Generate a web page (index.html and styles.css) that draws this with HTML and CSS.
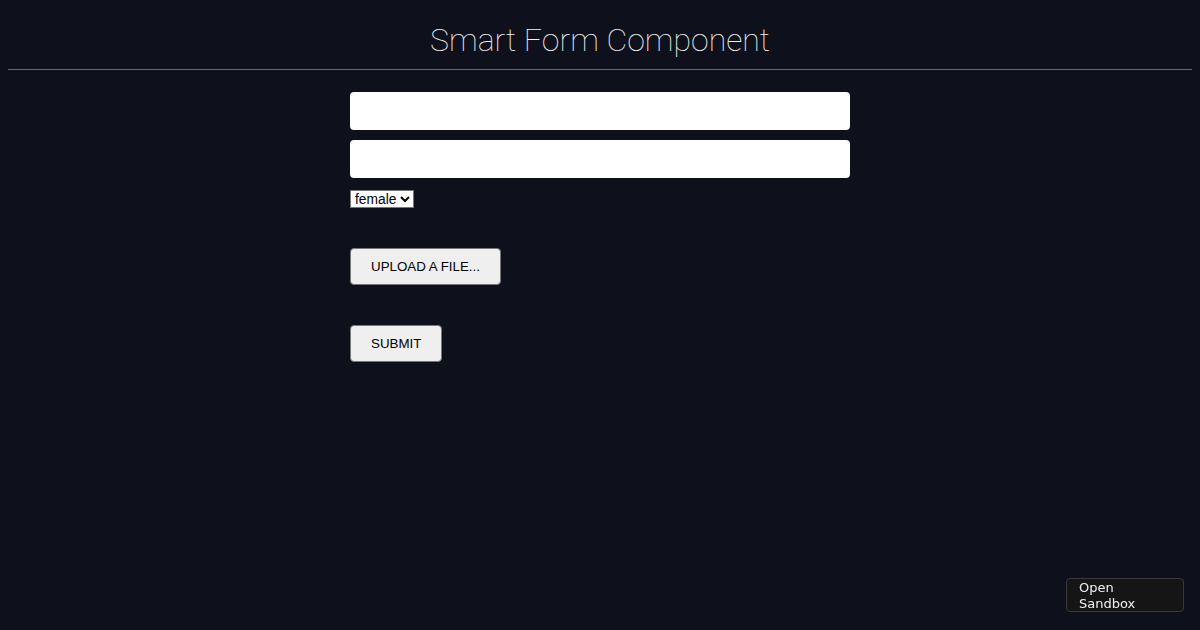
FILE: index.html
```html
<!DOCTYPE html>
<html>
<head>
<meta charset="utf-8">
<link rel="stylesheet" href="styles.css">
</head>
<body>
<header class="header">
  <h1 class="title">Smart Form Component</h1>
</header>
<hr class="divider">
<form class="form">
  <input class="field" type="text">
  <input class="field" type="text">
  <div class="select-row">
    <select class="gender">
      <option>female</option>
      <option>male</option>
    </select>
  </div>
  <div class="btn-row">
    <button type="button" class="btn">UPLOAD A FILE...</button>
  </div>
  <div class="btn-row">
    <button type="button" class="btn">SUBMIT</button>
  </div>
</form>
<a class="sandbox"><span class="sandbox-text">Open Sandbox</span></a>
</body>
</html>
```

FILE: styles.css
```css
html, body {
  background: #0e111b;
}
body {
  margin: 8px;
  font-family: "Liberation Sans", Arial, sans-serif;
}
.header {
  display: flex;
  justify-content: center;
}
.title {
  margin: 14px 0 10px;
  font-family: Roboto, sans-serif;
  font-weight: 100;
  font-size: 32px;
  line-height: 37px;
  color: #f2f2f2;
}
.divider {
  margin: 0;
  border: 0;
  height: 1px;
  background: #5b6a93;
}
.form {
  width: 500px;
  margin: 22px auto 0;
  display: flex;
  flex-direction: column;
}
.field {
  box-sizing: border-box;
  width: 500px;
  height: 38px;
  border: none;
  border-radius: 4px;
  background: #fff;
  margin: 0 0 10px;
  padding: 0 10px;
}
.select-row {
  display: flex;
  margin-top: 2px;
}
.gender {
  font-family: "Liberation Sans", Arial, sans-serif;
  font-size: 13.8px;
  height: 18px;
  padding: 0;
  background: #fff;
  color: #000;
  border: 1px solid #767676;
  border-radius: 0;
}
.btn-row {
  display: flex;
  margin-top: 40px;
}
.btn {
  box-sizing: border-box;
  height: 37px;
  padding: 0 20px;
  font-family: "Liberation Sans", Arial, sans-serif;
  font-size: 13.33px;
  color: #000;
  background: #efefef;
  border: 1px solid #767676;
  border-radius: 4px;
}
.sandbox {
  position: fixed;
  right: 16px;
  bottom: 18px;
  box-sizing: border-box;
  width: 118px;
  height: 34px;
  padding: 1px 12px;
  background: #151515;
  border: 1px solid #3a3a3a;
  border-radius: 4px;
  color: #f0f0f0;
  font-family: "DejaVu Sans", sans-serif;
  font-size: 13px;
  line-height: 16px;
}
.sandbox-text {
  display: block;
  width: 60px;
}
```
